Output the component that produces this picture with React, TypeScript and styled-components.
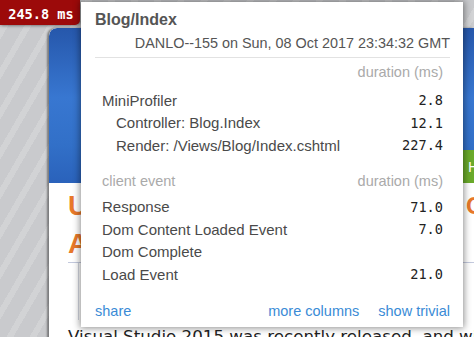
import React from "react";
import styled, { createGlobalStyle } from "styled-components";

const Global = createGlobalStyle`
  html, body { margin: 0; padding: 0; }
  body {
    width: 474px;
    height: 337px;
    overflow: hidden;
    background-color: #cbcccf;
    background-image: repeating-linear-gradient(
      120deg,
      #c9cacd 0px,
      #c9cacd 14px,
      #d2d3d5 14px,
      #d2d3d5 20px
    );
    font-family: "Liberation Sans", Arial, sans-serif;
  }
`;

const Page = styled.div`
  position: relative;
  width: 474px;
  height: 337px;
  overflow: hidden;
`;

const Site = styled.div`
  margin: 28px 0 0 49px;
  height: 360px;
  background: #ffffff;
  border-top-left-radius: 8px;
  box-shadow: -2px 0 2px rgba(0, 0, 0, 0.4);
  overflow: hidden;
`;

const Header = styled.header`
  height: 155px;
  border-top-left-radius: 8px;
  background: linear-gradient(180deg, #2657ab 0%, #3877d1 45%, #3270c8 75%, #2a62bb 100%);
  display: flex;
  align-items: flex-end;
  justify-content: flex-end;
`;

const Nav = styled.nav`
  width: 174px;
  height: 33px;
  background: #6aaa2a;
  display: flex;
  align-items: center;
  padding-left: 168px;
  box-sizing: border-box;
  overflow: hidden;
`;

const NavItem = styled.span`
  color: #ffffff;
  font-size: 15px;
  white-space: nowrap;
`;

const Main = styled.main`
  padding: 4px 0 0 19px;
`;

const Columns = styled.div`
  display: grid;
  grid-template-columns: 398px 1fr;
`;

const Heading = styled.h1`
  margin: 0;
  font-size: 28px;
  line-height: 37.5px;
  font-weight: bold;
  color: #e8782a;
  white-space: nowrap;
`;

const SideHeading = styled.h2`
  margin: 0;
  font-size: 24px;
  line-height: 37.5px;
  font-weight: bold;
  color: #e8782a;
  white-space: nowrap;
`;

const Divider = styled.div`
  border-top: 1px solid #c3c9dd;
`;

const Card = styled.div`
  margin-left: 10px;
  height: 57px;
  border-left: 1px solid #d3d6df;
`;

const BodyText = styled.p`
  margin: 5px 0 0 0;
  font-family: "DejaVu Sans", sans-serif;
  font-size: 16.7px;
  line-height: 22px;
  color: #222222;
  white-space: nowrap;
`;

const Badge = styled.div`
  position: absolute;
  left: 0;
  top: 0;
  width: 80px;
  height: 25px;
  background: #9c0a0a;
  color: #ffffff;
  font-family: "DejaVu Sans Mono", monospace;
  font-weight: bold;
  font-size: 13.6px;
  display: flex;
  align-items: center;
  justify-content: center;
  padding: 3px 0 0 2px;
  box-sizing: border-box;
  border-bottom-right-radius: 5px;
  box-shadow: 1px 1px 3px rgba(0, 0, 0, 0.4);
`;

const Popup = styled.div`
  position: absolute;
  left: 81px;
  top: 2px;
  width: 382px;
  height: 325px;
  box-sizing: border-box;
  padding: 8px 13px 0 14px;
  background: #ffffff;
  box-shadow: 0 0 7px 1px rgba(0, 0, 0, 0.45);
  display: flex;
  flex-direction: column;
  color: #4a4a4a;
`;

const Title = styled.div`
  font-size: 16px;
  font-weight: bold;
  line-height: 20px;
  color: #555555;
`;

const Subtitle = styled.div`
  margin-top: 3px;
  font-size: 14.4px;
  line-height: 20px;
  text-align: right;
  color: #555555;
`;

const Rule = styled.div`
  margin-top: 4px;
  border-top: 1px solid #e2e2e2;
`;

const Row = styled.div<{ $height?: number; $gap?: number }>`
  display: flex;
  align-items: center;
  justify-content: space-between;
  height: ${(p) => p.$height ?? 22.5}px;
  margin-top: ${(p) => p.$gap ?? 0}px;
  padding: 0 7px;
`;

const Label = styled.span<{ $indent?: boolean }>`
  font-size: 15px;
  color: #4a4a4a;
  padding-left: ${(p) => (p.$indent ? 14 : 0)}px;
  white-space: nowrap;
`;

const Muted = styled.span`
  font-size: 14.5px;
  color: #aaaaaa;
  white-space: nowrap;
`;

const Value = styled.span`
  font-family: "DejaVu Sans Mono", monospace;
  font-size: 13.6px;
  color: #222222;
`;

const Links = styled.div`
  margin-top: 15px;
  height: 20px;
  display: flex;
  align-items: center;
  gap: 19px;
`;

const Link = styled.a<{ $push?: boolean }>`
  font-size: 14.5px;
  color: #3a8bd6;
  text-decoration: none;
  margin-left: ${(p) => (p.$push ? "auto" : "0")};
  cursor: pointer;
`;

type Timing = { label: string; value: string; indent?: boolean };

const serverTimings: Timing[] = [
  { label: "MiniProfiler", value: "2.8" },
  { label: "Controller: Blog.Index", value: "12.1", indent: true },
  { label: "Render: /Views/Blog/Index.cshtml", value: "227.4", indent: true },
];

const clientTimings: Timing[] = [
  { label: "Response", value: "71.0" },
  { label: "Dom Content Loaded Event", value: "7.0" },
  { label: "Dom Complete", value: "" },
  { label: "Load Event", value: "21.0" },
];

export default function App() {
  return (
    <Page>
      <Global />
      <Site>
        <Header>
          <Nav>
            <NavItem>Home</NavItem>
          </Nav>
        </Header>
        <Main>
          <Columns>
            <Heading>
              Upgrading to Visual Studio
              <br />
              ASP.NET Core 2.0
            </Heading>
            <SideHeading>Categories</SideHeading>
          </Columns>
          <Divider />
          <Card />
          <BodyText>Visual Studio 2015 was recently released, and with it</BodyText>
        </Main>
      </Site>

      <Badge>245.8 ms</Badge>

      <Popup>
        <Title>Blog/Index</Title>
        <Subtitle>DANLO--155 on Sun, 08 Oct 2017 23:34:32 GMT</Subtitle>
        <Rule />
        <Row $height={20} $gap={4}>
          <Muted />
          <Muted>duration (ms)</Muted>
        </Row>
        {serverTimings.map((t, i) => (
          <Row key={t.label} $gap={i === 0 ? 7 : 0}>
            <Label $indent={t.indent}>{t.label}</Label>
            <Value>{t.value}</Value>
          </Row>
        ))}
        <Row $height={20} $gap={14}>
          <Muted>client event</Muted>
          <Muted>duration (ms)</Muted>
        </Row>
        {clientTimings.map((t, i) => (
          <Row key={t.label} $gap={i === 0 ? 5 : 0}>
            <Label>{t.label}</Label>
            <Value>{t.value}</Value>
          </Row>
        ))}
        <Links>
          <Link>share</Link>
          <Link $push>more columns</Link>
          <Link>show trivial</Link>
        </Links>
      </Popup>
    </Page>
  );
}
